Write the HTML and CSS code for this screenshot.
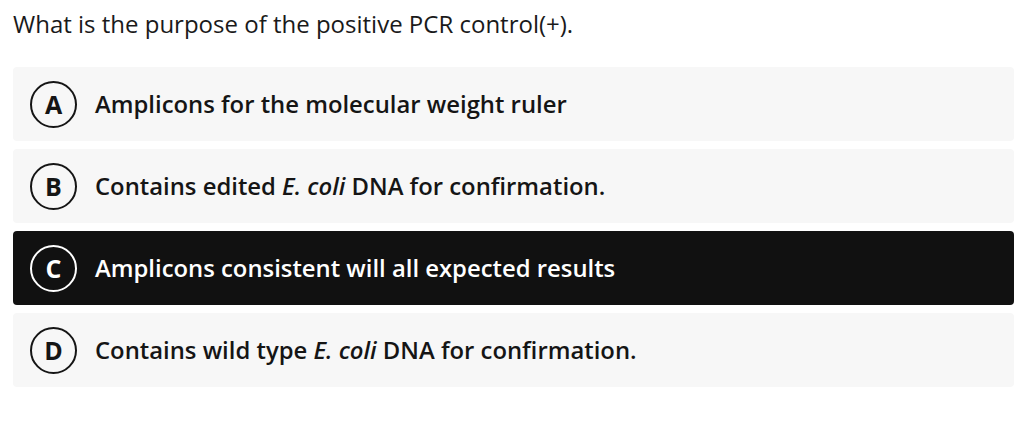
FILE: index.html
```html
<!DOCTYPE html>
<html>
<head>
<meta charset="utf-8">
<link rel="stylesheet" href="styles.css">
</head>
<body>
<div class="page">
  <h1 class="question">What is the purpose of the positive PCR control(+).</h1>
  <div class="options">
    <div class="option"><span class="badge">A</span><span class="label">Amplicons for the molecular weight ruler</span></div>
    <div class="option"><span class="badge">B</span><span class="label">Contains edited <i>E. coli</i> DNA for confirmation.</span></div>
    <div class="option selected"><span class="badge">C</span><span class="label">Amplicons consistent will all expected results</span></div>
    <div class="option"><span class="badge">D</span><span class="label">Contains wild type <i>E. coli</i> DNA for confirmation.</span></div>
  </div>
</div>
</body>
</html>
```
FILE: styles.css
```css
html, body {
  margin: 0;
  padding: 0;
  background: #fff;
}
.page {
  padding: 8px 10px 0 13px;
  font-family: "Open Sans", "Liberation Sans", sans-serif;
  color: #1a1a1a;
}
.question {
  margin: 0;
  font-size: 24px;
  font-weight: 400;
  line-height: 32px;
}
.options {
  margin-top: 27px;
  display: flex;
  flex-direction: column;
  gap: 8px;
}
.option {
  display: flex;
  align-items: center;
  height: 74px;
  box-sizing: border-box;
  padding-left: 17px;
  background: #f7f7f7;
  border-radius: 4px;
  color: #151515;
}
.option.selected {
  background: #111111;
  color: #ffffff;
}
.badge {
  width: 47px;
  height: 47px;
  box-sizing: border-box;
  border: 2px solid currentColor;
  border-radius: 50%;
  display: flex;
  align-items: center;
  justify-content: center;
  font-weight: 700;
  font-size: 25px;
  line-height: 1;
  flex-shrink: 0;
}
.label {
  margin-left: 18px;
  font-size: 23.85px;
  font-weight: 600;
}
```
